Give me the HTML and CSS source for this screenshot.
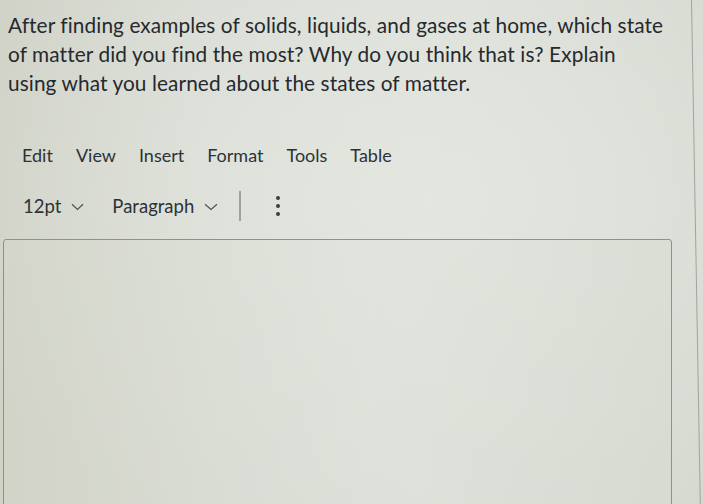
FILE: index.html
```html
<!DOCTYPE html>
<html lang="en">
<head>
<meta charset="utf-8">
<title>Question</title>
<link rel="stylesheet" href="styles.css">
</head>
<body>
<div class="page">
  <p class="question">After finding examples of solids, liquids, and gases at home, which state of matter did you find the most? Why do you think that is? Explain using what you learned about the states of matter.</p>
  <nav class="menubar">
    <span class="menu">Edit</span>
    <span class="menu">View</span>
    <span class="menu">Insert</span>
    <span class="menu">Format</span>
    <span class="menu">Tools</span>
    <span class="menu">Table</span>
  </nav>
  <div class="toolbar">
    <span class="tb-item tb-size">12pt
      <svg class="chev" width="13" height="8" viewBox="0 0 13 8"><path d="M1 1.2 L6.5 6.5 L12 1.2" fill="none" stroke="#4a5258" stroke-width="1.2"/></svg>
    </span>
    <span class="tb-item tb-block">Paragraph
      <svg class="chev" width="14" height="8" viewBox="0 0 14 8"><path d="M1 1.2 L7 6.5 L13 1.2" fill="none" stroke="#4a5258" stroke-width="1.2"/></svg>
    </span>
    <span class="tb-sep"></span>
    <span class="tb-more"><i></i><i></i><i></i></span>
  </div>
  <div class="editor"></div>
</div>
</body>
</html>
```

FILE: styles.css
```css
html, body {
  margin: 0;
  padding: 0;
}
body {
  width: 703px;
  height: 504px;
  overflow: hidden;
  font-family: Lato, "Open Sans", sans-serif;
  color: #2b3036;
  background:
    radial-gradient(ellipse 520px 360px at 430px 200px, rgba(228,232,225,0.85), rgba(228,232,225,0) 100%),
    linear-gradient(90deg, #d0d2c7 0%, #d9dcd4 30%, #dde0d9 60%, #d6d9d0 100%);
}
.page {
  position: relative;
  height: 504px;
  overflow: hidden;
}
.page::after {
  content: "";
  position: absolute;
  top: 0;
  left: 691px;
  height: 504px;
  border-left: 1.5px solid #a0a49e;
  transform-origin: top left;
  transform: skewX(1deg);
}
.question {
  margin: 0;
  padding: 10px 0 0 8px;
  width: 660px;
  font-size: 20.8px;
  letter-spacing: 0.1px;
  line-height: 29px;
  color: #26292e;
}
.menubar {
  display: flex;
  gap: 23px;
  margin-top: 48px;
  height: 20px;
  line-height: 20px;
  padding-left: 22px;
  font-size: 18px;
  color: #2d3238;
}
.menu { white-space: nowrap; }
.toolbar {
  display: flex;
  align-items: center;
  margin-top: 25px;
  height: 32px;
  padding-left: 23px;
  font-size: 18.5px;
  color: #2d3238;
}
.tb-item {
  display: flex;
  align-items: center;
  white-space: nowrap;
}
.chev { margin-left: 10px; margin-top: 1px; }
.tb-block { margin-left: 28px; }
.tb-sep {
  width: 1.5px;
  height: 30px;
  background: #9ea29e;
  margin-left: 21px;
}
.tb-more {
  display: flex;
  flex-direction: column;
  gap: 4px;
  margin-left: 35px;
}
.tb-more i {
  display: block;
  width: 4px;
  height: 4px;
  border-radius: 50%;
  background: #3a4046;
}
.editor {
  margin-top: 17px;
  margin-left: 3px;
  width: 667px;
  height: 300px;
  border: 1.5px solid #8e928d;
  border-radius: 3px;
  background: linear-gradient(90deg, rgba(212,214,202,0.5), rgba(222,226,218,0.3) 55%, rgba(214,218,208,0.4));
}
```
